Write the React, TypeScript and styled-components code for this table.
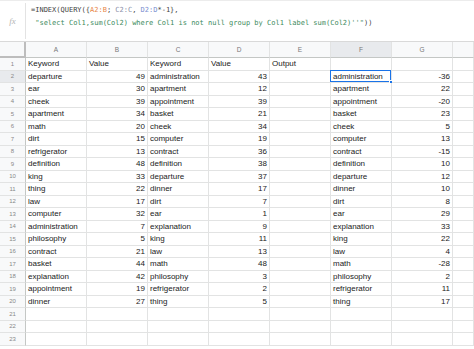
import React from 'react';
import styled, { createGlobalStyle } from 'styled-components';

const GlobalStyle = createGlobalStyle`
  html, body {
    margin: 0;
    padding: 0;
    background: #fff;
  }
  body {
    font-family: 'Liberation Sans', Arial, sans-serif;
  }
`;

const GRID = '#e2e3e3';
const HEAD_LINE = '#c4c7c5';

const Page = styled.div`
  width: 474px;
  height: 349px;
  overflow: hidden;
  background: #fff;
`;

const FormulaBar = styled.div`
  display: flex;
  height: 42px;
  box-sizing: border-box;
  border-top: 1px solid #ececec;
  border-bottom: 1px solid #d9d9d9;
`;

const FxBox = styled.div`
  width: 25px;
  flex: none;
  display: flex;
  align-items: center;
  justify-content: center;
  border-right: 1px solid #e3e3e3;
  margin: 2px 0;
  color: #b4b4b4;
  font-family: 'Liberation Serif', serif;
  font-style: italic;
  font-size: 9px;
`;

const FormulaText = styled.div`
  padding: 3px 0 0 5px;
  font-family: 'DejaVu Sans Mono', 'Liberation Mono', monospace;
  font-size: 7px;
  line-height: 13px;
  color: #444;
  white-space: pre;
`;

const Ref = styled.span<{ $c: string }>`
  color: ${(p) => p.$c};
`;

const Str = styled.span`
  color: #3c8a5c;
`;

const Sheet = styled.div`
  display: grid;
  grid-template-columns: 26px repeat(7, 61px) 1fr;
  grid-template-rows: 16px;
  grid-auto-rows: 12.5px;
`;

const Corner = styled.div`
  background: #f8f9fa;
  box-sizing: border-box;
  border-right: 2px solid #bdbdbd;
  border-bottom: 2px solid #bdbdbd;
`;

const ColHead = styled.div<{ $active?: boolean }>`
  background: ${(p) => (p.$active ? '#e8eaed' : '#f8f9fa')};
  box-sizing: border-box;
  border-right: 1px solid ${GRID};
  border-bottom: 1px solid ${HEAD_LINE};
  display: flex;
  align-items: center;
  justify-content: center;
  color: #777;
  font-size: 6.5px;
`;

const RowHead = styled.div<{ $active?: boolean }>`
  background: ${(p) => (p.$active ? '#e8eaed' : '#f8f9fa')};
  box-sizing: border-box;
  border-right: 1px solid ${HEAD_LINE};
  border-bottom: 1px solid ${GRID};
  display: flex;
  align-items: center;
  justify-content: center;
  color: #888;
  font-size: 6px;
`;

const Cell = styled.div<{ $num?: boolean }>`
  position: relative;
  box-sizing: border-box;
  border-right: 1px solid ${GRID};
  border-bottom: 1px solid ${GRID};
  display: flex;
  align-items: center;
  justify-content: ${(p) => (p.$num ? 'flex-end' : 'flex-start')};
  padding: 0 2px 0 2px;
  font-size: 8px;
  color: #222;
  white-space: nowrap;
  overflow: visible;
`;

const Selection = styled.div`
  position: absolute;
  left: -1px;
  top: -1px;
  right: 0;
  bottom: 0;
  border: 1.5px solid #1a73e8;
  pointer-events: none;
`;

const Handle = styled.div`
  position: absolute;
  right: -3px;
  bottom: -3px;
  width: 4px;
  height: 4px;
  background: #1a73e8;
  border: 1px solid #fff;
  box-sizing: border-box;
`;

const left: [string, number][] = [
  ['departure', 49], ['ear', 30], ['cheek', 39], ['apartment', 34], ['math', 20],
  ['dirt', 15], ['refrigerator', 13], ['definition', 48], ['king', 33], ['thing', 22],
  ['law', 17], ['computer', 32], ['administration', 7], ['philosophy', 5], ['contract', 21],
  ['basket', 44], ['explanation', 42], ['appointment', 19], ['dinner', 27],
];

const right: [string, number][] = [
  ['administration', 43], ['apartment', 12], ['appointment', 39], ['basket', 21], ['cheek', 34],
  ['computer', 19], ['contract', 36], ['definition', 38], ['departure', 37], ['dinner', 17],
  ['dirt', 7], ['ear', 1], ['explanation', 9], ['king', 11], ['law', 13],
  ['math', 48], ['philosophy', 3], ['refrigerator', 2], ['thing', 5],
];

const output: [string, number][] = [
  ['administration', -36], ['apartment', 22], ['appointment', -20], ['basket', 23], ['cheek', 5],
  ['computer', 13], ['contract', -15], ['definition', 10], ['departure', 12], ['dinner', 10],
  ['dirt', 8], ['ear', 29], ['explanation', 33], ['king', 22], ['law', 4],
  ['math', -28], ['philosophy', 2], ['refrigerator', 11], ['thing', 17],
];

const cols = ['A', 'B', 'C', 'D', 'E', 'F', 'G', ''];

type Val = string | number | undefined;

function rowValues(r: number): Val[] {
  if (r === 1) return ['Keyword', 'Value', 'Keyword', 'Value', 'Output', undefined, undefined, undefined];
  const i = r - 2;
  if (i < 0 || i >= left.length) return new Array(8).fill(undefined);
  return [left[i][0], left[i][1], right[i][0], right[i][1], undefined, output[i][0], output[i][1], undefined];
}

const App: React.FC = () => {
  const rows = Array.from({ length: 23 }, (_, i) => i + 1);
  return (
    <Page>
      <GlobalStyle />
      <FormulaBar>
        <FxBox>fx</FxBox>
        <FormulaText>
          {'=INDEX(QUERY({'}
          <Ref $c="#e8874a">A2:B</Ref>
          {'; '}
          <Ref $c="#8a8fa8">C2:C</Ref>
          {', '}
          <Ref $c="#7b8fd0">D2:D</Ref>
          {'*-1},'}
          {'\n'}
          <Str>{' "select Col1,sum(Col2) where Col1 is not null group by Col1 label sum(Col2)\'\'"'}</Str>
          {'))'}
        </FormulaText>
      </FormulaBar>
      <Sheet>
        <Corner />
        {cols.map((c, i) => (
          <ColHead key={i} $active={c === 'F'}>{c}</ColHead>
        ))}
        {rows.map((r) => (
          <React.Fragment key={r}>
            <RowHead $active={r === 2}>{r}</RowHead>
            {rowValues(r).map((v, ci) => (
              <Cell key={ci} $num={typeof v === 'number'}>
                {v}
                {r === 2 && ci === 5 && (
                  <Selection>
                    <Handle />
                  </Selection>
                )}
              </Cell>
            ))}
          </React.Fragment>
        ))}
      </Sheet>
    </Page>
  );
};

export default App;
